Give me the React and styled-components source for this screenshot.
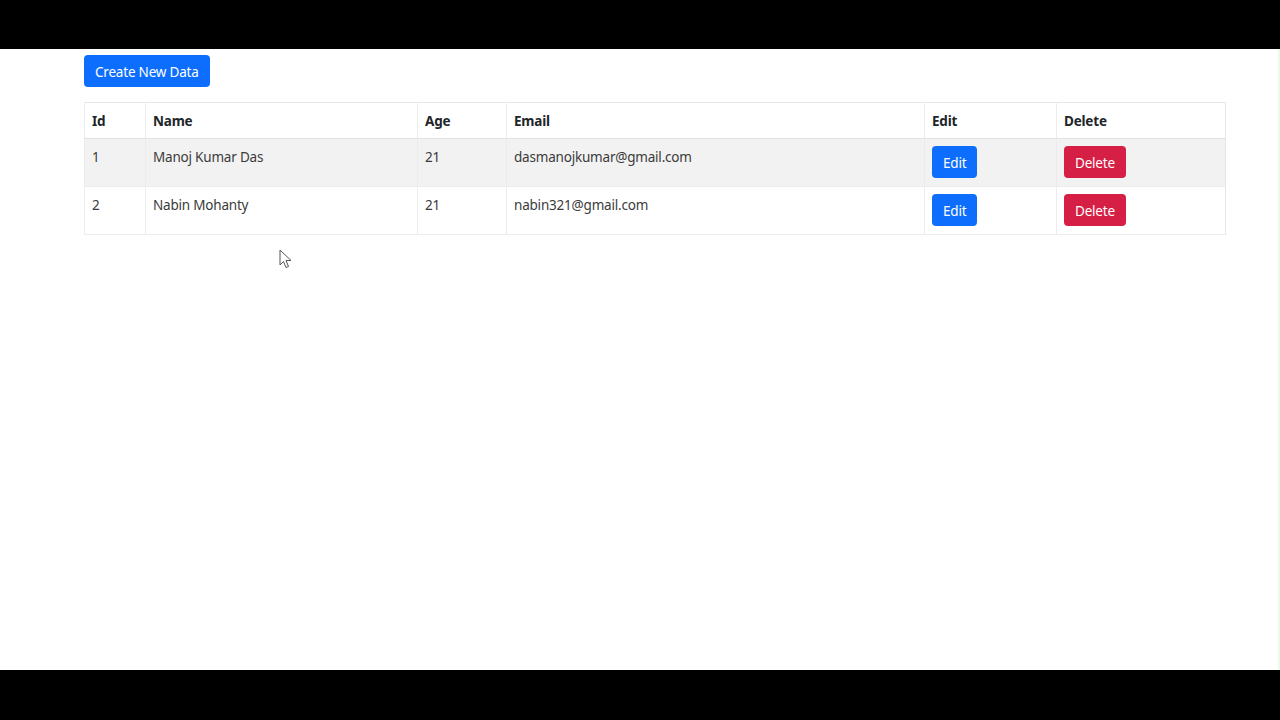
import React from "react";
import styled, { createGlobalStyle } from "styled-components";

const GlobalStyle = createGlobalStyle`
  * { box-sizing: border-box; }
  body {
    margin: 0;
    background: #000;
    font-family: "Noto Sans", "Open Sans", sans-serif;
    color: #212529;
  }
`;

const Page = styled.div`
  width: 1280px;
  height: 720px;
  display: flex;
  flex-direction: column;
  position: relative;
`;

const Bar = styled.div`
  height: ${(p) => p.h}px;
  background: #000;
  flex-shrink: 0;
`;

const Main = styled.main`
  flex: 1;
  background: #fff;
  padding: 6px 0 0 84px;
  border-right: 2px solid #e9fbe9;
`;

const Button = styled.button`
  display: block;
  height: 32px;
  padding: 2px 11px 0;
  border: none;
  border-radius: 4px;
  font-family: inherit;
  font-size: 13.5px;
  letter-spacing: -0.2px;
  color: #fff;
  background: ${(p) => (p.danger ? "#d61f45" : "#0d6efd")};
  cursor: pointer;
`;

const Table = styled.table`
  margin-top: 15px;
  width: 1141px;
  border-collapse: collapse;
  table-layout: fixed;
  border: 1px solid #e6e6e6;
  font-size: 13.5px;
  letter-spacing: -0.2px;
`;

const Th = styled.th`
  height: 36px;
  padding: 1px 7px 0;
  text-align: left;
  font-weight: 700;
  color: #212529;
  border-left: 1px solid #ececec;
  border-bottom: 1px solid #e2e2e2;
`;

const Row = styled.tr`
  background: ${(p) => (p.striped ? "#f2f2f2" : "#fff")};
`;

const Td = styled.td`
  padding: 8px 7px 7px;
  vertical-align: top;
  line-height: 21px;
  color: #3b3b3b;
  border-left: 1px solid #ececec;
  border-bottom: 1px solid #ececec;
`;

const ButtonCell = styled(Td)`
  padding-top: 7px;
  padding-bottom: 8px;
`;

const Cursor = styled.svg`
  position: absolute;
  left: 279px;
  top: 249px;
`;

const columns = [
  { label: "Id", w: 61 },
  { label: "Name", w: 272 },
  { label: "Age", w: 89 },
  { label: "Email", w: 418 },
  { label: "Edit", w: 132 },
  { label: "Delete", w: 169 },
];

const rows = [
  { id: 1, name: "Manoj Kumar Das", age: 21, email: "dasmanojkumar@gmail.com" },
  { id: 2, name: "Nabin Mohanty", age: 21, email: "nabin321@gmail.com" },
];

export default function App() {
  return (
    <Page>
      <GlobalStyle />
      <Bar h={49} />
      <Main>
        <Button>Create New Data</Button>
        <Table>
          <colgroup>
            {columns.map((c) => (
              <col key={c.label} style={{ width: c.w }} />
            ))}
          </colgroup>
          <thead>
            <tr>
              {columns.map((c) => (
                <Th key={c.label}>{c.label}</Th>
              ))}
            </tr>
          </thead>
          <tbody>
            {rows.map((r, i) => (
              <Row key={r.id} striped={i % 2 === 0}>
                <Td>{r.id}</Td>
                <Td>{r.name}</Td>
                <Td>{r.age}</Td>
                <Td>{r.email}</Td>
                <ButtonCell>
                  <Button>Edit</Button>
                </ButtonCell>
                <ButtonCell>
                  <Button danger>Delete</Button>
                </ButtonCell>
              </Row>
            ))}
          </tbody>
        </Table>
      </Main>
      <Bar h={50} />
      <Cursor width="14" height="21" viewBox="0 0 14 21">
        <path
          d="M1 1 L1 16 L4.5 12.5 L7 18.5 L9.5 17.5 L7 11.5 L12 11.5 Z"
          fill="#fff"
          stroke="#555"
          strokeWidth="1"
          strokeLinejoin="round"
        />
      </Cursor>
    </Page>
  );
}
